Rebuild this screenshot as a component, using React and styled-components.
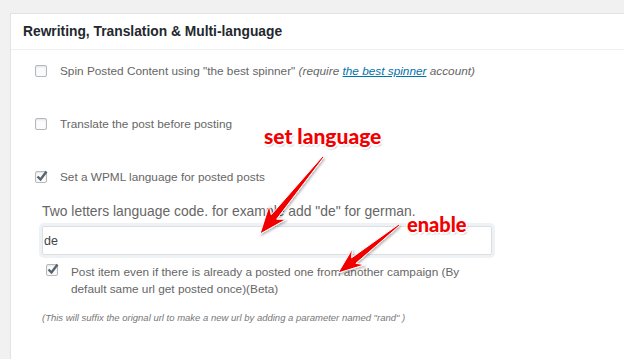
import React from "react";
import styled, { createGlobalStyle } from "styled-components";

const GlobalStyle = createGlobalStyle`
  html, body {
    margin: 0;
    padding: 0;
    background: #f1f1f1;
    overflow: hidden;
  }
  body {
    font-family: "Liberation Sans", Arial, sans-serif;
  }
`;

const Page = styled.div`
  position: relative;
  width: 624px;
  height: 359px;
  padding: 13px 0 0 10px;
  box-sizing: border-box;
  overflow: hidden;
`;

const Panel = styled.div`
  width: 700px;
  height: 400px;
  background: #fff;
  border: 1px solid #e3e3e3;
  box-shadow: 0 1px 1px rgba(0, 0, 0, 0.04);
`;

const PanelHeader = styled.div`
  height: 35px;
  display: flex;
  align-items: center;
  padding-left: 12px;
  border-bottom: 1px solid #eeeeee;
  font-size: 13.8px;
  font-weight: 700;
  color: #23282d;
`;

const PanelBody = styled.div`
  padding: 11px 0 0 24px;
`;

const Row = styled.label`
  display: flex;
  align-items: center;
  height: 20px;
  margin-bottom: ${(p) => p.$gap || 33}px;
  font-size: 11.8px;
  color: #666;
`;

const Box = styled.span`
  width: 12px;
  height: 12px;
  box-sizing: border-box;
  border: 1px solid #b4b9be;
  border-radius: 2px;
  background: #fbfbfb;
  box-shadow: inset 0 1px 2px rgba(0, 0, 0, 0.1);
  margin-right: 13px;
  flex-shrink: 0;
  position: relative;
`;

const Tick = styled.svg`
  position: absolute;
  left: -1px;
  top: -3px;
`;

const Note = styled.em`
  color: #666;
`;

const Link = styled.a`
  color: #0073aa;
  text-decoration: underline;
`;

const SubBlock = styled.div`
  padding-left: 7px;
`;

const Description = styled.div`
  font-size: 13.9px;
  line-height: 18px;
  color: #666;
  margin-top: -18px;
`;

const TextInput = styled.div`
  width: 450px;
  height: 29px;
  margin: 6px 0 0 0;
  box-sizing: border-box;
  border: 1px solid #dcdfe2;
  border-radius: 2px;
  box-shadow: 0 0 0 3px #eef2f5;
  display: flex;
  align-items: center;
  padding-left: 1px;
  font-size: 12.5px;
  color: #444;
`;

const CheckRow = styled.div`
  display: flex;
  align-items: flex-start;
  margin: 9px 0 0 4px;
  font-size: 11.8px;
  line-height: 17px;
  color: #666;
`;

const CheckText = styled.div`
  width: 392px;
`;

const SmallNote = styled.div`
  margin-top: 14px;
  font-size: 9.5px;
  font-style: italic;
  color: #777;
`;

const Overlay = styled.svg`
  position: absolute;
  left: 0;
  top: 0;
  pointer-events: none;
  overflow: visible;
`;

const Label = styled.div`
  position: absolute;
  left: ${(p) => p.$x}px;
  top: ${(p) => p.$y}px;
  font-family: Lato, "Open Sans", sans-serif;
  font-weight: 900;
  font-size: ${(p) => p.$size}px;
  color: #f20000;
  white-space: nowrap;
  text-shadow: -1px -1px 0 #fff, 1px -1px 0 #fff, -1px 1px 0 #fff,
    1px 1px 0 #fff, 0 -1.5px 0 #fff, 0 1.5px 0 #fff, -1.5px 0 0 #fff,
    1.5px 0 0 #fff, 1px 2px 2px rgba(0, 0, 0, 0.35);
`;

function Checkbox({ checked }) {
  return (
    <Box>
      {checked && (
        <Tick width="14" height="14" viewBox="0 0 14 14">
          <path d="M2.5 7.5 L5.5 10.5 L11.5 2.5" fill="none" stroke="#59636d" strokeWidth="2.4" />
        </Tick>
      )}
    </Box>
  );
}

export default function App() {
  return (
    <Page>
      <GlobalStyle />
      <Panel>
        <PanelHeader>Rewriting, Translation &amp; Multi-language</PanelHeader>
        <PanelBody>
          <Row>
            <Checkbox />
            <span>
              Spin Posted Content using "the best spinner"{" "}
              <Note>
                (require <Link href="#">the best spinner</Link> account)
              </Note>
            </span>
          </Row>
          <Row>
            <Checkbox />
            <span>Translate the post before posting</span>
          </Row>
          <Row>
            <Checkbox checked />
            <span>Set a WPML language for posted posts</span>
          </Row>
          <SubBlock>
            <Description>Two letters language code. for example add "de" for german.</Description>
            <TextInput>de</TextInput>
            <CheckRow>
              <Checkbox checked />
              <CheckText>
                Post item even if there is already a posted one from another campaign (By
                default same url get posted once)(Beta)
              </CheckText>
            </CheckRow>
            <SmallNote>
              (This will suffix the orignal url to make a new url by adding a parameter named "rand" )
            </SmallNote>
          </SubBlock>
        </PanelBody>
      </Panel>

      <Overlay width="624" height="359" viewBox="0 0 624 359">
        <defs>
          <filter id="sh" x="-20%" y="-20%" width="140%" height="140%">
            <feDropShadow dx="1" dy="1.5" stdDeviation="1.2" floodColor="#000" floodOpacity="0.3" />
          </filter>
        </defs>
        <g filter="url(#sh)" fill="#f20000" stroke="#fff" strokeWidth="1" strokeLinejoin="round">
          <polygon points="323.62,157.51 276.64,219.19 286.23,219.29 260,234 269.21,205.37 271.22,214.75 322.38,156.49" />
          <polygon points="399.50,225.63 355.89,263.37 364.63,264.77 338,273 352.25,249.05 351.55,257.87 398.50,224.37" />
        </g>
      </Overlay>
      <Label $x={264} $y={123} $size={21}>set language</Label>
      <Label $x={407} $y={212} $size={20}>enable</Label>
    </Page>
  );
}
